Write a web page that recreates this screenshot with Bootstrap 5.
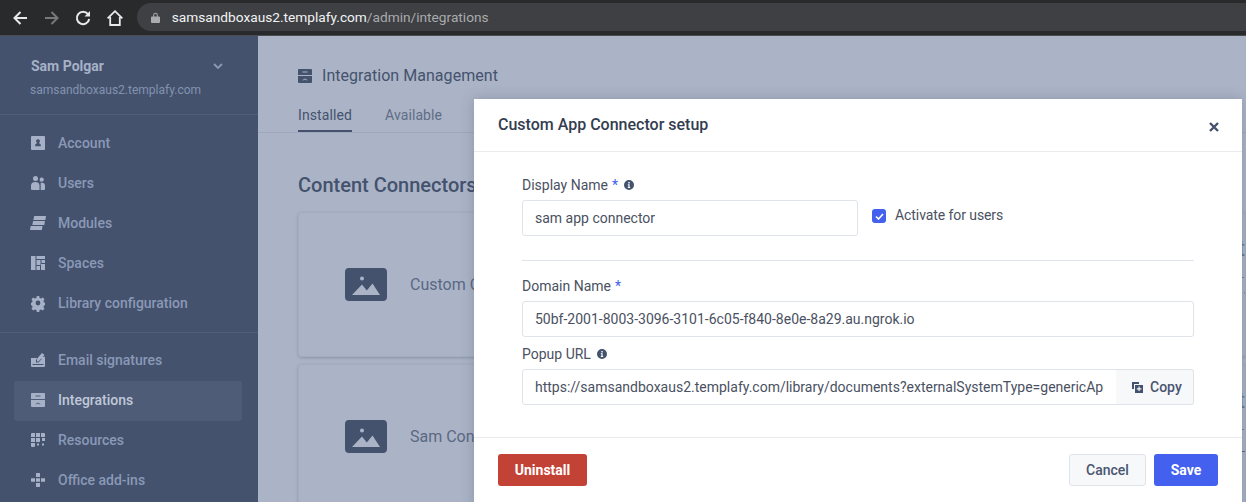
<!DOCTYPE html>
<html lang="en">
<head>
  <meta charset="UTF-8" />
  <title>Integration Management</title>
  <link href="https://cdn.jsdelivr.net/npm/bootstrap@5.3.0/dist/css/bootstrap.min.css" rel="stylesheet" />
  <style>
    html, body { height: 100%; overflow: hidden; }
    body { font-family: Roboto, "Liberation Sans", sans-serif; font-size: 14px; color: #3f4a5f; background: #abb4c6; }
    .chrome-bar { height: 36px; background: #292a2c; border-bottom: 1px solid #4a4b4d; padding-left: 12px; }
    .chrome-btn { width: 32px; height: 36px; }
    .url-pill { height: 28px; margin-left: -2px; margin-top: -1px; padding-left: 14px; width: 1120px; background: #3f4043; border-radius: 14px 0 0 14px; font-size: 13.7px; color: #a9abae; gap: 12px; }
    .url-host { color: #f1f3f4; }
    .page-wrap { height: 466px; }
    .side-nav { width: 258px; background: #44526e; color: #8a99b6; font-weight: 500; }
    .side-head { height: 79px; padding: 22px 35px 0 31px; border-bottom: 1px solid #4f5d79; }
    .side-user { color: #a6b1c7; font-size: 14px; font-weight: 700; line-height: 16px; }
    .side-domain { font-size: 12px; font-weight: 400; color: #8392ae; margin-top: 7px; margin-left: -1px; }
    .side-group { padding: 8px 16px 9px 14px; }
    .side-group + .side-group { border-top: 1px solid #4f5d79; padding-top: 7px; }
    .side-link { height: 40px; padding-left: 17px; gap: 13px; color: #8a99b6; font-size: 14px; text-decoration: none; border-radius: 3px; }
    .side-link svg { width: 14px; height: 14px; fill: #a6b1c7; flex: none; overflow: visible; }
    .side-link.is-on { background: #4e5c78; color: #c0c9d9; margin-top: 1px; margin-bottom: -1px; padding-bottom: 2px; }
    .main-area { min-width: 0; padding-left: 40px; overflow: hidden; }
    .main-title { height: 61px; padding-top: 29px; gap: 10px; font-size: 16px; line-height: 22px; color: #44526e; letter-spacing: .04px; }
    .main-title svg { width: 14px; height: 14px; fill: #44526e; flex: none; }
    .tab-row { height: 36px; margin-left: -40px; padding-left: 40px; gap: 33px; border-bottom: 1px solid #9ea8bc; letter-spacing: .1px; }
    .tab-item { height: 35px; padding-top: 8px; color: #5f6c87; }
    .tab-item.is-on { color: #44526e; border-bottom: 2px solid #44526e; margin-bottom: -1px; }
    .sect-title { font-size: 20px; font-weight: 500; color: #44526e; margin: 0; padding-top: 40px; line-height: 24px; height: 79px; }
    .conn-tile { height: 145px; margin-bottom: 7px; border: 1px solid #a3adc0; border-radius: 4px; box-shadow: 0 1px 3px rgba(50,60,85,.28); padding-left: 46px; gap: 23px; font-size: 16px; color: #5a6885; }
    .conn-tile > svg { width: 42px; height: 33px; flex: none; }
    .tile-name { white-space: nowrap; }
    .tile-edge { width: 4px; height: 100%; margin-left: auto; }
    .tile-edge svg { width: 4px; height: 143px; display: block; }
    .edge-letter { position: absolute; top: 23px; left: -3px; font-size: 22px; line-height: 26px; color: #6d7a92; }
    .setup-modal { position: absolute; left: 474px; top: 99px; width: 768px; height: 420px; background: #fff; box-shadow: 0 0 12px rgba(50,60,85,.25); }
    .setup-head { height: 53px; padding: 0 23px 0 24px; border-bottom: 1px solid #e9ebef; }
    .setup-title { font-size: 16px; font-weight: 500; color: #333d50; margin: 0; }
    .close-x { width: 10px; height: 10px; margin-top: 3px; }
    .setup-body { height: 285px; padding: 24px 48px 0; }
    .fld-label { font-size: 14px; line-height: 18px; color: #4a5162; margin: 0 0 6px; gap: 4px; }
    .req-mark { color: #4361ee; }
    .info-dot { width: 10px; height: 10px; margin-left: 2px; }
    .fld-input { height: 36px; border: 1px solid #dfe3ea; border-radius: 3px; font-size: 14px; color: #4a5162; padding: 0 12px; box-shadow: none; }
    .name-input { width: 336px; }
    .chk-box { width: 14px; height: 14px; background: #4361ee; border-radius: 3px; flex: none; }
    .chk-row { gap: 9px; margin-top: -4px; margin-left: 14px; color: #4a5162; }
    .chk-text { margin-bottom: 2px; letter-spacing: -.08px; }
    .fld-rule { margin: 24px 0 16px; border: 0; border-top: 1px solid #dfe3ea; opacity: 1; }
    .copy-btn { width: 78px; height: 36px; background: #f7f8fa; border: 1px solid #dfe3ea; border-left: 0; border-radius: 0 3px 3px 0; color: #4a5570; font-weight: 500; font-size: 14px; gap: 7px; padding: 0 0 0 16px; }
    .setup-foot { height: 66px; padding: 0 24px; border-top: 1px solid #e9ebef; }
    .act-btn { height: 32px; font-size: 14px; font-weight: 700; border-radius: 3px; padding: 0; }
    .btn-uninstall { width: 89px; background: #c24236; border: 0; color: #fff; }
    .btn-cancel { width: 77px; background: #f7f8fa; border: 1px solid #dfe3ea; color: #4a5570; font-weight: 500; }
    .btn-save { width: 64px; background: #4361ee; border: 0; color: #fff; }
  </style>
</head>
<body>
  <div class="chrome-bar d-flex align-items-center">
    <div class="chrome-btn d-flex align-items-center"><svg width="16" height="16" viewBox="0 0 16 16" fill="none" stroke="#e8eaed" stroke-width="2"><path d="M15 8H2.500M8.500 2 2.500 8l6 6"/></svg></div>
    <div class="chrome-btn d-flex align-items-center"><svg width="16" height="16" viewBox="0 0 16 16" fill="none" stroke="#77797c" stroke-width="2"><path d="M1 8h12.500M7.500 2l6 6-6 6"/></svg></div>
    <div class="chrome-btn d-flex align-items-center"><svg width="16" height="16" viewBox="0 0 16 16" fill="none" stroke="#e8eaed" stroke-width="2"><path d="M13 4.200A6.200 6.200 0 1 0 14.200 9"/><path d="M15 1v5.500H9.500z" fill="#e8eaed" stroke="none"/></svg></div>
    <div class="chrome-btn d-flex align-items-center"><svg width="16" height="16" viewBox="0 0 16 16" fill="none" stroke="#e8eaed" stroke-width="1.800"><path d="M.6 8.400 8 1.200l7.400 7.200M3.200 7v8h9.600V7"/></svg></div>
    <div class="url-pill d-flex align-items-center">
      <svg width="9" height="11" viewBox="0 0 9 11"><path fill="#a9abae" d="M1 4.500h7a1 1 0 0 1 1 1V10a1 1 0 0 1-1 1H1a1 1 0 0 1-1-1V5.500a1 1 0 0 1 1-1zM2.200 4.500V3a2.300 2.300 0 0 1 4.600 0v1.500H5.800V3a1.300 1.300 0 0 0-2.600 0v1.500z"/></svg>
      <span><span class="url-host">samsandboxaus2.templafy.com</span>/admin/integrations</span>
    </div>
  </div>

  <div class="page-wrap d-flex">
    <nav class="side-nav flex-shrink-0">
      <div class="side-head">
        <div class="d-flex justify-content-between align-items-center">
          <div class="side-user">Sam Polgar</div>
          <svg width="10" height="6" viewBox="0 0 10 6" fill="none" stroke="#8a99b6" stroke-width="1.800"><path d="M1 1l4 4 4-4"/></svg>
        </div>
        <div class="side-domain">samsandboxaus2.templafy.com</div>
      </div>
      <div class="side-group">
        <a class="side-link d-flex align-items-center" href="#"><svg viewBox="0 0 14 14"><path fill-rule="evenodd" d="M1 0h12a1 1 0 0 1 1 1v12a1 1 0 0 1-1 1H1a1 1 0 0 1-1-1V1a1 1 0 0 1 1-1zm6 3.200a1.900 1.900 0 0 0-1.200 3.400c0 1-.6 1.400-1.600 2v1.700h5.600V8.600c-1-.6-1.600-1-1.600-2A1.900 1.900 0 0 0 7 3.200z"/></svg>Account</a>
        <a class="side-link d-flex align-items-center" href="#"><svg viewBox="0 0 14 14"><circle cx="4.500" cy="2.500" r="2.500"/><circle cx="10.700" cy="3.700" r="2.100"/><path d="M0 9.500C0 7 2 6 4.300 6s4.200 1 4.200 3.500V14H1a1 1 0 0 1-1-1zM9.700 6.800h1.500c1.700 0 2.800 1.100 2.800 2.900V13a1 1 0 0 1-1 1H9.700z"/></svg>Users</a>
        <a class="side-link d-flex align-items-center" href="#"><svg viewBox="0 0 14 14"><path d="M3.200 0H15l-.6 4H2.400zM2.100 5h11.800l-.6 4H1.300zM-.3 10h11.800l-.6 4H-1z"/></svg>Modules</a>
        <a class="side-link d-flex align-items-center" href="#"><svg viewBox="0 0 14 14"><path d="M0 0h4.500v14H0zM5.500 0H14v3H5.500zM5.500 4h4v5h-4zM10.500 4H14v3h-3.500zM5.500 10H9v4H5.500zM10 8h4v6h-4z"/></svg>Spaces</a>
        <a class="side-link d-flex align-items-center" href="#"><svg viewBox="0 0 14 14"><path fill-rule="evenodd" d="M5.800 0h2.400l.4 2 1.500.6 1.700-1.100 1.700 1.700-1.100 1.700.6 1.500 1 .4v2.400l-1 .4-.6 1.500 1.100 1.700-1.700 1.700-1.700-1.100-1.500.6-.4 2H5.800l-.4-2-1.500-.6-1.700 1.100L.5 12.800l1.100-1.700L1 9.600l-1-.4V6.800l1-.4.6-1.500L.5 3.200l1.700-1.700 1.700 1.100 1.500-.6zM7 4.600a2.400 2.400 0 1 0 0 4.800 2.400 2.400 0 0 0 0-4.800z"/></svg>Library configuration</a>
      </div>
      <div class="side-group">
        <a class="side-link d-flex align-items-center" href="#"><svg viewBox="0 0 14 14"><path d="M0 5h6.500L5 7v2.500h2.500l3-3.300V4l3.500-.3V13a1 1 0 0 1-1 1H1a1 1 0 0 1-1-1zM7 4.500 11 0l1 .7 1.500 1.300L7.500 8.500H6V6.500zM1.500 11v1h11v-1z"/></svg>Email signatures</a>
        <a class="side-link is-on d-flex align-items-center" href="#"><svg viewBox="0 0 14 14"><path fill-rule="evenodd" d="M1 0h12a1 1 0 0 1 1 1v5H0V1a1 1 0 0 1 1-1zm3.500 2.500v1h5v-1zM0 7h14v6a1 1 0 0 1-1 1H1a1 1 0 0 1-1-1zm4.500 4L7 9.500 9.500 11l-.5.500L7 10.400 5 11.500z"/></svg>Integrations</a>
        <a class="side-link d-flex align-items-center" href="#"><svg viewBox="0 0 14 14"><path d="M1 0h3v4H0V1a1 1 0 0 1 1-1zM5 0h4v4H5zM10 0h3a1 1 0 0 1 1 1v3h-4zM0 5h4v4H0zM5 5h4v4H5zM11 5h3v3h-3zM0 10h4v3a1 1 0 0 1-1 1H1a1 1 0 0 1-1-1zM6 10.500h2v2H6zM11 10.500h2v2h-2z"/></svg>Resources</a>
        <a class="side-link d-flex align-items-center" href="#"><svg viewBox="0 0 14 14"><path d="M5 0h4v4H5zM0 5.200h4v3.600H0zM5 5.200h4v3.600H5zM10 5.200h4v3.600h-4zM5 10h4v4H5z"/></svg>Office add-ins</a>
      </div>
    </nav>

    <main class="main-area flex-grow-1">
      <div class="main-title d-flex align-items-start">
        <svg class="mt-1" viewBox="0 0 14 14"><path fill-rule="evenodd" d="M1 0h12a1 1 0 0 1 1 1v5H0V1a1 1 0 0 1 1-1zm3.500 2.500v1h5v-1zM0 7h14v6a1 1 0 0 1-1 1H1a1 1 0 0 1-1-1zm4.500 4L7 9.500 9.500 11l-.5.500L7 10.400 5 11.500z"/></svg>
        Integration Management
      </div>
      <div class="tab-row d-flex">
        <div class="tab-item is-on">Installed</div>
        <div class="tab-item">Available</div>
      </div>
      <h2 class="sect-title">Content Connectors</h2>
      <div class="conn-tile d-flex align-items-center">
        <svg viewBox="0 0 42 33"><path fill="#44526e" fill-rule="evenodd" d="M4 0h34a4 4 0 0 1 4 4v25a4 4 0 0 1-4 4H4a4 4 0 0 1-4-4V4a4 4 0 0 1 4-4zm15 10.500a2 2 0 1 0-4 0 2 2 0 0 0 4 0zM7 27h28l-7.500-11.500-5.700 7-4.800-6z"/></svg>
        <span class="tile-name">Custom Con</span>
        <div class="tile-edge position-relative">
          <svg viewBox="0 0 4 143"><rect x="1" y="64" width="2" height="1" fill="#76829a"/><rect x="0" y="79" width="1" height="2" fill="#6f8fc0"/><rect x="3" y="79" width="1" height="2" fill="#8b93a6"/><rect x="0" y="99" width="1" height="2" fill="#5b7fc0"/></svg>
          <span class="edge-letter">t</span>
        </div>
      </div>
      <div class="conn-tile d-flex align-items-center">
        <svg viewBox="0 0 42 33"><path fill="#44526e" fill-rule="evenodd" d="M4 0h34a4 4 0 0 1 4 4v25a4 4 0 0 1-4 4H4a4 4 0 0 1-4-4V4a4 4 0 0 1 4-4zm15 10.500a2 2 0 1 0-4 0 2 2 0 0 0 4 0zM7 27h28l-7.500-11.500-5.700 7-4.800-6z"/></svg>
        <span class="tile-name">Sam Con</span>
        <div class="tile-edge position-relative">
          <svg viewBox="0 0 4 143"><rect x="1" y="64" width="2" height="1" fill="#76829a"/><rect x="0" y="86" width="4" height="1" fill="#5a6885"/><rect x="0" y="101" width="1" height="2" fill="#5b7fc0"/></svg>
          <span class="edge-letter">t</span>
        </div>
      </div>
    </main>
  </div>

  <div class="setup-modal">
    <div class="setup-head d-flex justify-content-between align-items-center">
      <h5 class="setup-title">Custom App Connector setup</h5>
      <svg class="close-x" viewBox="0 0 10 10" fill="none" stroke="#44526e" stroke-width="2.400"><path d="M1 1l8 8M9 1l-8 8"/></svg>
    </div>
    <div class="setup-body">
      <label class="fld-label d-flex align-items-center"><span>Display Name</span> <span class="req-mark">*</span>
        <svg class="info-dot" viewBox="0 0 10 10"><path fill="#44526e" fill-rule="evenodd" d="M5 0a5 5 0 1 1 0 10A5 5 0 0 1 5 0zM4.300 2v1.400h1.400V2zM3.800 4.300v.9h.6V7h-.6v1h2.400V7h-.6V4.300z"/></svg>
      </label>
      <div class="d-flex align-items-center">
        <input class="form-control fld-input name-input" type="text" value="sam app connector">
        <div class="chk-row d-flex align-items-center">
          <span class="chk-box d-flex align-items-center justify-content-center"><svg width="9" height="7" viewBox="0 0 9 7" fill="none" stroke="#fff" stroke-width="1.600"><path d="M1 3.500 3.500 6 8 1"/></svg></span>
          <span class="chk-text">Activate for users</span>
        </div>
      </div>
      <hr class="fld-rule">
      <label class="fld-label d-flex align-items-center"><span>Domain Name</span> <span class="req-mark">*</span></label>
      <input class="form-control fld-input" type="text" value="50bf-2001-8003-3096-3101-6c05-f840-8e0e-8a29.au.ngrok.io">
      <label class="fld-label d-flex align-items-center mt-2"><span>Popup URL</span>
        <svg class="info-dot" viewBox="0 0 10 10"><path fill="#44526e" fill-rule="evenodd" d="M5 0a5 5 0 1 1 0 10A5 5 0 0 1 5 0zM4.300 2v1.400h1.400V2zM3.800 4.300v.9h.6V7h-.6v1h2.400V7h-.6V4.300z"/></svg>
      </label>
      <div class="input-group">
        <input class="form-control fld-input" type="text" value="https://samsandboxaus2.templafy.com/library/documents?externalSystemType=genericApp&amp;externalSystemId=1">
        <button class="btn copy-btn d-flex align-items-center" type="button">
          <svg width="11" height="11" viewBox="0 0 11 11"><path fill="#44526e" fill-rule="evenodd" d="M0 0h7v2H2v5H0zM3 3h8v8H3zm3.500 1.500v1.700H4.800v1.200h1.700v1.700h1.200V7.400h1.700V6.200H7.700V4.500z"/></svg>
          Copy
        </button>
      </div>
    </div>
    <div class="setup-foot d-flex align-items-start pt-3">
      <button class="btn act-btn btn-uninstall" type="button">Uninstall</button>
      <div class="d-flex gap-2 ms-auto">
        <button class="btn act-btn btn-cancel" type="button">Cancel</button>
        <button class="btn act-btn btn-save" type="button">Save</button>
      </div>
    </div>
  </div>

  <script src="https://cdn.jsdelivr.net/npm/bootstrap@5.3.0/dist/js/bootstrap.bundle.min.js"></script>
</body>
</html>
